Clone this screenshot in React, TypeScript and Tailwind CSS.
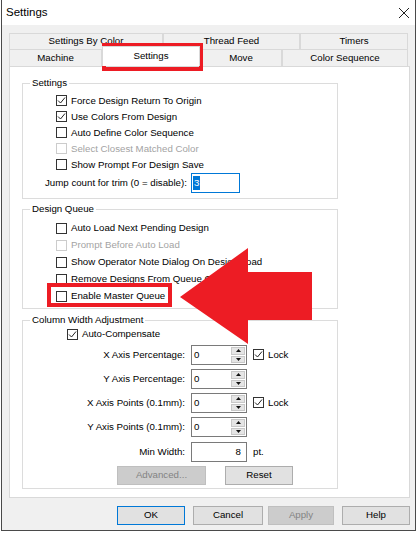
import React from 'react';

type CheckProps = {
  label: string;
  checked?: boolean;
  disabled?: boolean;
};

function CheckBox({ label, checked = false, disabled = false }: CheckProps) {
  return (
    <div className="flex items-center gap-[4px] whitespace-nowrap">
      <span
        className={`flex h-[11px] w-[11px] shrink-0 items-center justify-center border bg-white ${
          disabled ? 'border-[#cccccc]' : 'border-[#333333]'
        }`}
      >
        {checked && (
          <svg width="9" height="9" viewBox="0 0 9 9">
            <polyline points="1,4.5 3.5,7 8,1.5" fill="none" stroke="#222" strokeWidth="1" />
          </svg>
        )}
      </span>
      <span className={disabled ? 'text-[#a3a3a3]' : 'text-black'}>{label}</span>
    </div>
  );
}

function SpinInput({ value }: { value: string }) {
  return (
    <div className="flex h-[20px] w-[56px] border border-[#7a7a7a] bg-white">
      <span className="flex-1 pl-[2px] leading-[18px]">{value}</span>
      <div className="flex w-[16px] flex-col gap-px p-px">
        <span className="flex flex-1 items-center justify-center border border-[#c8c8c8] bg-[#e5e5e5]">
          <svg width="5" height="3" viewBox="0 0 5 3">
            <polygon points="2.5,0 5,3 0,3" fill="#111" />
          </svg>
        </span>
        <span className="flex flex-1 items-center justify-center border border-[#c8c8c8] bg-[#e5e5e5]">
          <svg width="5" height="3" viewBox="0 0 5 3">
            <polygon points="0,0 5,0 2.5,3" fill="#111" />
          </svg>
        </span>
      </div>
    </div>
  );
}

function AxisRow({ label, value, lock }: { label: string; value: string; lock?: boolean }) {
  return (
    <div className="flex h-[20px] items-center">
      <span className="w-[168px] whitespace-nowrap pr-[6px] text-right">{label}</span>
      <SpinInput value={value} />
      {lock && (
        <div className="ml-[6px]">
          <CheckBox label="Lock" checked />
        </div>
      )}
    </div>
  );
}

function Tab({ label, w, active }: { label: string; w: string; active?: boolean }) {
  return (
    <div
      className={`flex items-center justify-center border border-b-0 border-[#d9d9d9] ${w} ${
        active ? 'relative z-10 -mt-[2px] h-[20px] bg-white' : 'h-full bg-[#f0f0f0]'
      }`}
    >
      {label}
    </div>
  );
}

function Button({ label, w, disabled, focused }: { label: string; w: string; disabled?: boolean; focused?: boolean }) {
  return (
    <div
      className={`flex h-[19px] items-center justify-center border ${w} ${
        disabled
          ? 'border-[#bfbfbf] bg-[#cccccc] text-[#838383]'
          : focused
            ? 'border-[#0078d7] bg-[#e1e1e1]'
            : 'border-[#adadad] bg-[#e1e1e1]'
      }`}
    >
      {label}
    </div>
  );
}

export default function App() {
  return (
    <div className="relative h-[533px] w-[419px] bg-white font-['Liberation_Sans',Arial,sans-serif] text-[9.7px] text-black">
      <div className="ml-px flex h-[531px] w-[415px] flex-col border border-t-0 border-[#4a4a4a]">
        {/* title bar */}
        <div className="flex h-[25px] items-center justify-between bg-white pl-[4px] pr-[5px] text-[11.5px]">
          <span>Settings</span>
          <svg width="12" height="12" viewBox="0 0 12 12">
            <path d="M1 1 L11 11 M11 1 L1 11" stroke="#222" strokeWidth="1" />
          </svg>
        </div>

        <div className="flex-1 bg-[#f0f0f0] pl-[7px] pt-[8px]">
          {/* tabs */}
          <div className="flex h-[16px] w-[399px]">
            <Tab label="Settings By Color" w="w-[154px]" />
            <Tab label="Thread Feed" w="w-[137px]" />
            <Tab label="Timers" w="w-[108px]" />
          </div>
          <div className="flex h-[17px] w-[399px] items-end">
            <Tab label="Machine" w="w-[93px]" />
            <Tab label="Settings" w="w-[98px]" active />
            <Tab label="Move" w="w-[82px]" />
            <Tab label="Color Sequence" w="w-[126px]" />
          </div>

          {/* panel */}
          <div className="h-[432px] w-[401px] border border-[#d9d9d9] bg-white pl-[12px] pt-[10px]">
            <fieldset className="h-[122px] w-[316px] border border-[#dcdcdc]">
              <legend className="ml-[7px] px-[2px] leading-[12px]">Settings</legend>
              <div className="pl-[33px] pt-[4px]">
                {[
                  { label: 'Force Design Return To Origin', checked: true },
                  { label: 'Use Colors From Design', checked: true },
                  { label: 'Auto Define Color Sequence' },
                  { label: 'Select Closest Matched Color', disabled: true },
                  { label: 'Show Prompt For Design Save' },
                ].map((c) => (
                  <div key={c.label} className="flex h-[16px] items-center">
                    <CheckBox label={c.label} checked={c.checked} disabled={c.disabled} />
                  </div>
                ))}
              </div>
              <div className="flex h-[20px] items-center pl-[22px]">
                <span className="w-[146px] whitespace-nowrap">Jump count for trim (0 = disable):</span>
                <div className="flex h-[20px] w-[49px] items-center border border-[#0078d7] bg-white pl-[1px]">
                  <span className="bg-[#0078d7] px-[1px] leading-[14px] text-white">3</span>
                </div>
              </div>
            </fieldset>

            <fieldset className="mt-[4px] h-[106px] w-[316px] border border-[#dcdcdc]">
              <legend className="ml-[7px] px-[2px] leading-[12px]">Design Queue</legend>
              <div className="pl-[33px] pt-[5px]">
                {[
                  { label: 'Auto Load Next Pending Design' },
                  { label: 'Prompt Before Auto Load', disabled: true },
                  { label: 'Show Operator Note Dialog On Design Load' },
                  { label: 'Remove Designs From Queue On Completion' },
                  { label: 'Enable Master Queue' },
                ].map((c) => (
                  <div key={c.label} className="flex h-[17px] items-center">
                    <CheckBox label={c.label} disabled={c.disabled} />
                  </div>
                ))}
              </div>
            </fieldset>

            <fieldset className="mt-[5px] h-[175px] w-[316px] border border-[#dcdcdc]">
              <legend className="ml-[7px] px-[2px] leading-[12px]">Column Width Adjustment</legend>
              <div className="flex flex-col gap-[4px] pt-[1px]">
                <div className="flex h-[14px] items-center pl-[44px]">
                  <CheckBox label="Auto-Compensate" checked />
                </div>
                <AxisRow label="X Axis Percentage:" value="0" lock />
                <AxisRow label="Y Axis Percentage:" value="0" />
                <AxisRow label="X Axis Points (0.1mm):" value="0" lock />
                <AxisRow label="Y Axis Points (0.1mm):" value="0" />
                <div className="mt-px flex h-[20px] items-center">
                  <span className="w-[168px] pr-[6px] text-right">Min Width:</span>
                  <div className="flex h-[20px] w-[56px] items-center justify-end border border-[#7a7a7a] bg-white pr-[5px]">
                    8
                  </div>
                  <span className="ml-[6px]">pt.</span>
                </div>
                <div className="flex gap-[19px] pl-[94px]">
                  <Button label="Advanced..." w="w-[89px]" disabled />
                  <Button label="Reset" w="w-[68px]" />
                </div>
              </div>
            </fieldset>
          </div>

          {/* dialog buttons */}
          <div className="mt-[8px] flex">
            <div className="ml-[108px]">
              <Button label="OK" w="w-[68px]" focused />
            </div>
            <div className="ml-[8px]">
              <Button label="Cancel" w="w-[70px]" />
            </div>
            <div className="ml-[5px]">
              <Button label="Apply" w="w-[66px]" disabled />
            </div>
            <div className="ml-[8px]">
              <Button label="Help" w="w-[68px]" />
            </div>
          </div>
        </div>
      </div>

      {/* red annotations */}
      <div className="absolute left-[102px] top-[43px] h-[28px] w-[101px] border-[4px] border-[#ed1c24]" />
      <div className="absolute left-[47px] top-[283px] h-[24px] w-[125px] border-[4px] border-[#ed1c24]" />
      <svg className="absolute left-0 top-0" width="419" height="533" viewBox="0 0 419 533">
        <polygon
          points="180,297 248,248 248,272 312,272 312,320 248,320 248,344"
          fill="#ed1c24"
        />
      </svg>
    </div>
  );
}
